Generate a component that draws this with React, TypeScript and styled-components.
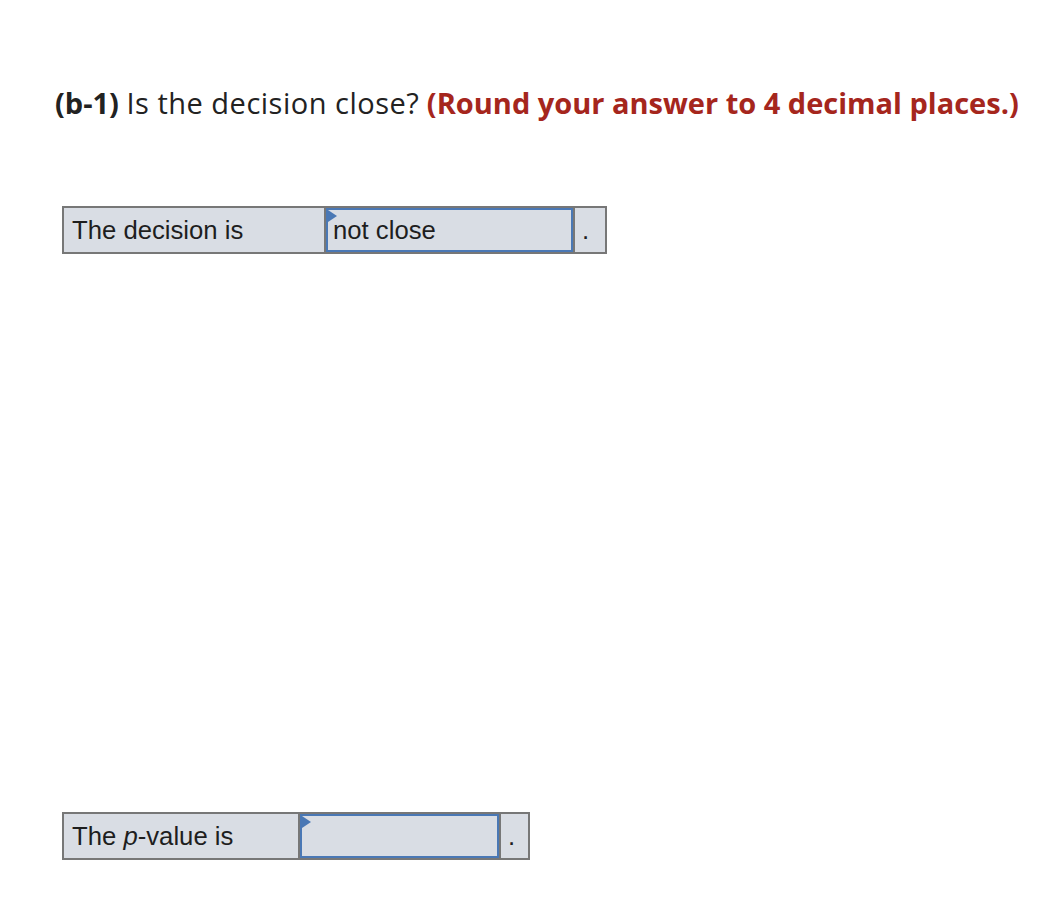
import styled, { createGlobalStyle } from 'styled-components';

const GlobalStyle = createGlobalStyle`
  body {
    margin: 0;
    background: #ffffff;
  }
`;

type AnswerRowProps = {
  label: React.ReactNode;
  labelWidth: number;
  inputWidth: number;
  dotWidth: number;
  value?: string;
};

const AnswerRow = (props: AnswerRowProps) => {
  return (
    <Row>
      <LabelCell $width={props.labelWidth}>{props.label}</LabelCell>
      <InputCell $width={props.inputWidth}>
        <Flag />
        <span>{props.value}</span>
      </InputCell>
      <DotCell $width={props.dotWidth}>.</DotCell>
    </Row>
  );
};

const App = () => {
  return (
    <Page>
      <GlobalStyle />
      <Heading>
        <strong>(b-1)</strong> <Question>Is the decision close?</Question>{' '}
        <Hint>(Round your answer to 4 decimal places.)</Hint>
      </Heading>
      <AnswerRow
        label="The decision is"
        labelWidth={262}
        inputWidth={247}
        dotWidth={32}
        value="not close"
      />
      <Spacer />
      <AnswerRow
        label={
          <span>
            The{' '}<em>p</em>-value is
          </span>
        }
        labelWidth={236}
        inputWidth={199}
        dotWidth={29}
      />
    </Page>
  );
};

export default App;

const Page = styled.div`
  padding: 84px 0 0 62px;
  display: flex;
  flex-direction: column;
  align-items: flex-start;
`;

const Heading = styled.h2`
  margin: 0 0 84px -7px;
  font-family: 'Open Sans', Lato, sans-serif;
  font-weight: 400;
  font-size: 29px;
  line-height: 38px;
  color: #222222;
  white-space: nowrap;

  strong {
    font-weight: 700;
  }
`;

const Question = styled.span`
  letter-spacing: 0.5px;
`;

const Hint = styled.span`
  font-weight: 700;
  color: #a5261d;
`;

const Row = styled.div`
  display: flex;
  border: 2px solid #777777;
  background: #d9dde4;
  font-family: 'Liberation Sans', Arial, sans-serif;
  font-size: 25.7px;
  color: #1e1e1e;
`;

const LabelCell = styled.div<{ $width: number }>`
  width: ${(p) => p.$width}px;
  height: 44px;
  box-sizing: border-box;
  padding-left: 8px;
  display: flex;
  align-items: center;
  border-right: 2px solid #777777;

  em {
    font-style: italic;
  }
`;

const InputCell = styled.div<{ $width: number }>`
  position: relative;
  width: ${(p) => p.$width}px;
  height: 44px;
  box-sizing: border-box;
  border: 2px solid #4a78b5;
  padding-left: 5px;
  display: flex;
  align-items: center;
`;

const Flag = styled.div`
  position: absolute;
  left: 0;
  top: 0;
  width: 0;
  height: 0;
  border-top: 6px solid transparent;
  border-bottom: 6px solid transparent;
  border-left: 9px solid #4a78b5;
`;

const DotCell = styled.div<{ $width: number }>`
  width: ${(p) => p.$width}px;
  height: 44px;
  box-sizing: border-box;
  border-left: 2px solid #777777;
  padding-left: 7px;
  display: flex;
  align-items: center;
`;

const Spacer = styled.div`
  height: 558px;
`;
